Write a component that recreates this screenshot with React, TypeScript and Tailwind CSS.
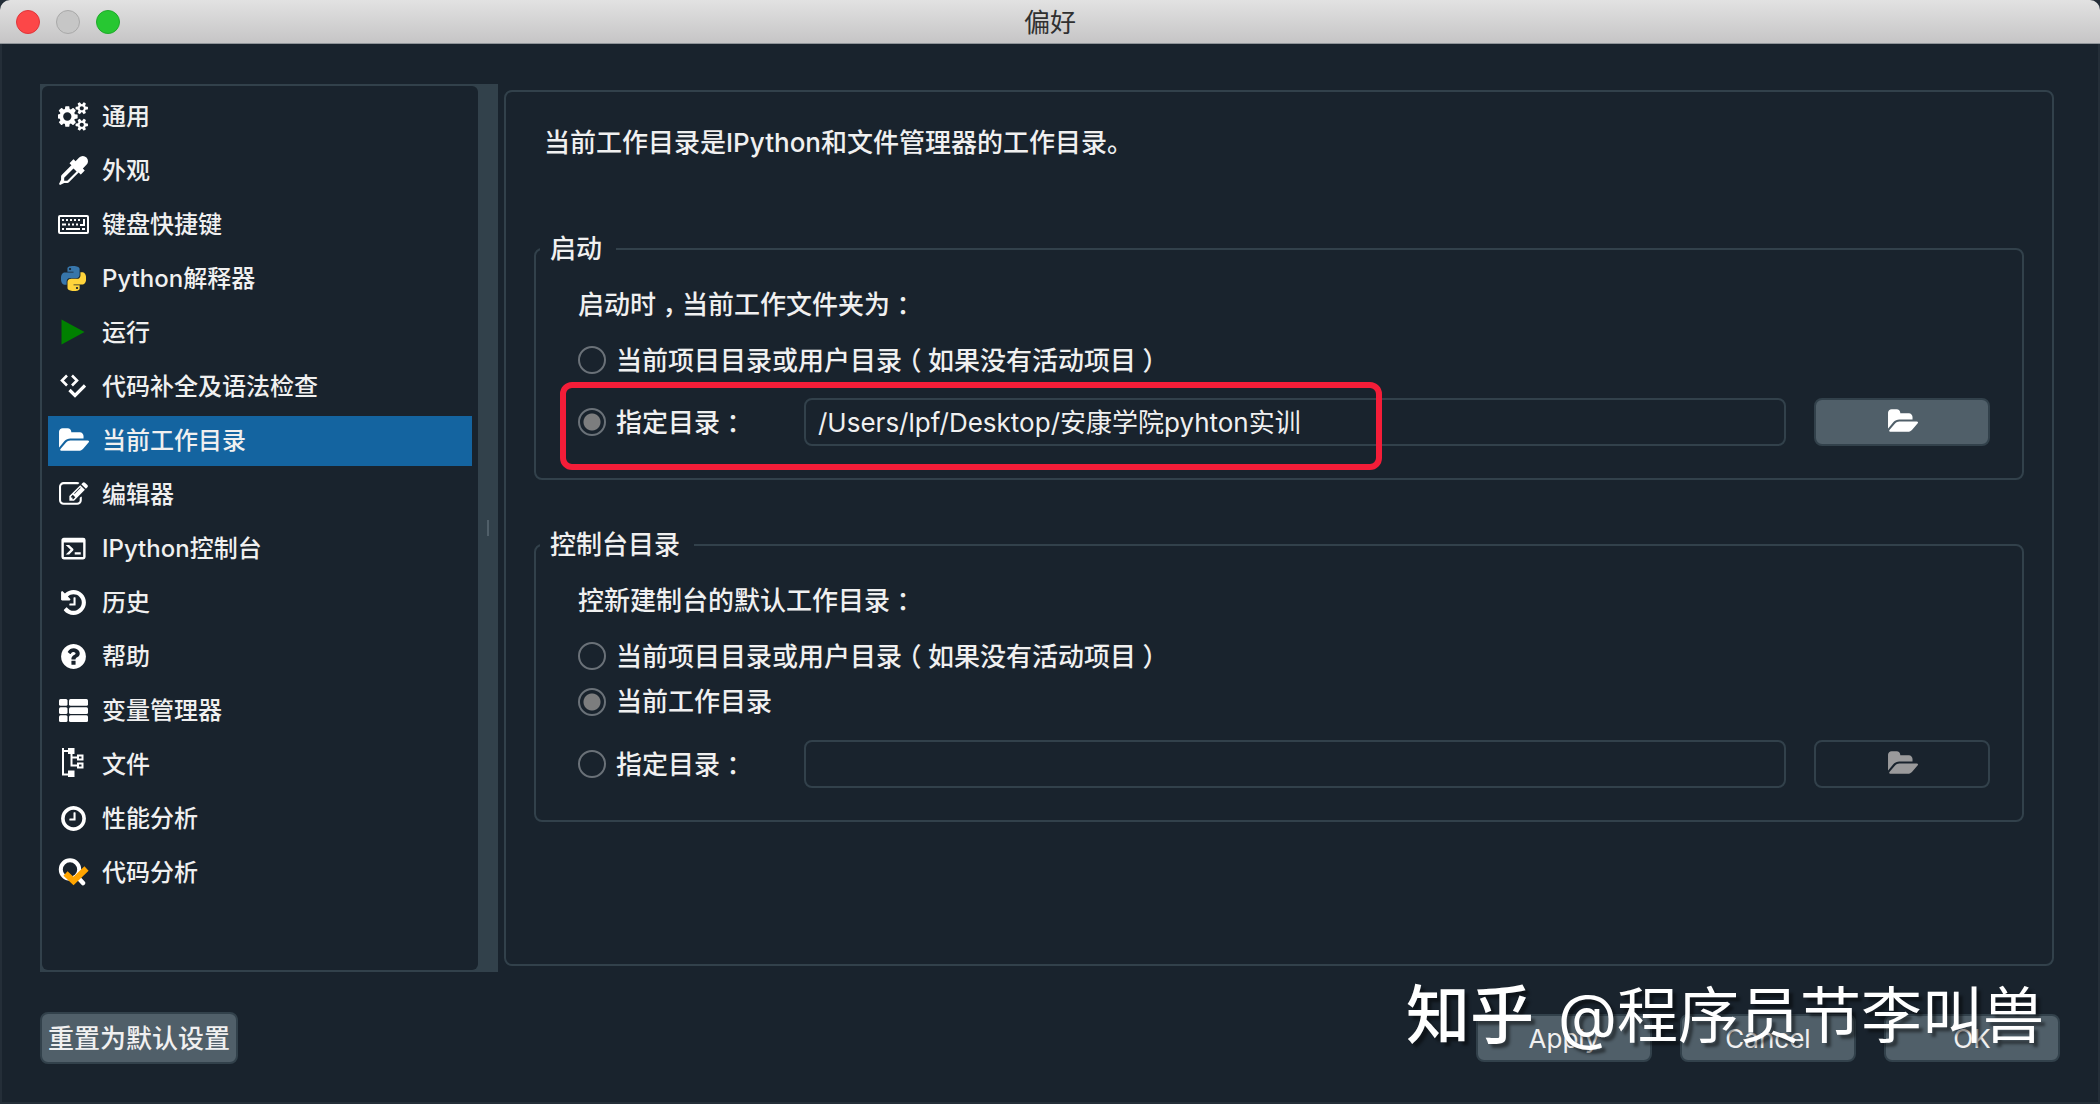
import React, { useState } from 'react';

type IconProps = { className?: string };

function CogsIcon() {
  return (
    <svg viewBox="0 0 1920 1792" className="w-[31px] h-[29px]" fill="currentColor" aria-hidden="true">
      <path d="M832 896q0-106-75-181t-181-75-181 75-75 181 75 181 181 75 181-75 75-181zm768 512q0-52-38-90t-90-38-90 38-38 90q0 53 37.5 90.5t90.5 37.5 90.5-37.5 37.5-90.5zm0-1024q0-52-38-90t-90-38-90 38-38 90q0 53 37.5 90.5t90.5 37.5 90.5-37.5 37.5-90.5zm-384 421v185q0 10-7 19.5t-16 10.5l-155 24q-11 35-32 76 34 48 90 115 7 11 7 20 0 12-7 19-23 30-82.5 89.5t-78.5 59.5q-11 0-21-7l-115-90q-37 19-77 31-11 108-23 155-7 24-30 24h-186q-11 0-20-7.5t-10-17.5l-23-153q-34-10-75-31l-118 89q-7 7-20 7-11 0-21-8-144-133-144-160 0-9 7-19 10-14 41-53t47-61q-23-44-35-82l-152-24q-10-1-17-9.5t-7-19.5v-185q0-10 7-19.5t16-10.5l155-24q11-35 32-76-34-48-90-115-7-11-7-20 0-12 7-20 22-30 82-89t79-59q11 0 21 7l115 90q34-18 77-32 11-108 23-154 7-24 30-24h186q11 0 20 7.5t10 17.5l23 153q34 10 75 31l118-89q8-7 20-7 11 0 21 8 144 133 144 160 0 8-7 19-12 16-42 54t-45 60q23 48 34 82l152 23q10 2 17 10.5t7 19.5zm640 533v140q0 16-149 31-12 27-30 52 51 113 51 138 0 4-4 7-122 71-124 71-8 0-46-47t-52-68q-20 2-30 2t-30-2q-14 21-52 68t-46 47q-2 0-124-71-4-3-4-7 0-25 51-138-18-25-30-52-149-15-149-31v-140q0-16 149-31 13-29 30-52-51-113-51-138 0-4 4-7 4-2 35-20t59-34 30-16q8 0 46 46.5t52 67.5q20-2 30-2t30 2q51-71 92-112l6-2q4 0 124 70 4 3 4 7 0 25-51 138 17 23 30 52 149 15 149 31zm0-1024v140q0 16-149 31-12 27-30 52 51 113 51 138 0 4-4 7-122 71-124 71-8 0-46-47t-52-68q-20 2-30 2t-30-2q-14 21-52 68t-46 47q-2 0-124-71-4-3-4-7 0-25 51-138-18-25-30-52-149-15-149-31v-140q0-16 149-31 13-29 30-52-51-113-51-138 0-4 4-7 4-2 35-20t59-34 30-16q8 0 46 46.5t52 67.5q20-2 30-2t30 2q51-71 92-112l6-2q4 0 124 70 4 3 4 7 0 25-51 138 17 23 30 52 149 15 149 31z" />
    </svg>
  );
}

function DropperIcon() {
  return (
    <svg viewBox="0 0 1792 1792" className="size-[29px]" fill="currentColor" aria-hidden="true">
      <path d="M1698 94q94 94 94 226.5t-94 225.5l-225 223 104 104q10 10 10 23t-10 23l-210 210q-10 10-23 10t-23-10l-105-105-603 603q-37 37-90 37h-203l-256 128-64-64 128-256v-203q0-53 37-90l603-603-105-105q-10-10-10-23t10-23l210-210q10-10 23-10t23 10l104 104 223-225q93-94 225.5-94t226.5 94zm-1186 1442l576-576-192-192-576 576v192h192z" />
    </svg>
  );
}

function KeyboardIcon() {
  return (
    <svg viewBox="0 0 31 19" className="w-[31px] h-[19px]" fill="currentColor" aria-hidden="true">
      <path fillRule="evenodd" d="M2 0H29A2 2 0 0 1 31 2V17A2 2 0 0 1 29 19H2A2 2 0 0 1 0 17V2A2 2 0 0 1 2 0ZM2 2V17H29V2Z" />
      <path d="M4 4h2v2h-2zM8 4h2v2h-2zM12 4h2v2h-2zM16 4h2v2h-2zM20 4h2v2h-2zM25 4h2v7h-5v-2h3zM4 8.500h4v2h-4zM10 8.500h2v2h-2zM14 8.500h2v2h-2zM18 8.500h2v2h-2zM4 13h2v2h-2zM8 13h14v2h-14zM24 13h3v2h-3z" />
    </svg>
  );
}

function PythonIcon() {
  return (
    <svg viewBox="0 0 24 24" className="size-[25px]" aria-hidden="true">
      <path
        fill="#3776ab"
        d="M14.25.18l.9.2.73.26.59.3.45.32.34.34.25.34.16.33.1.3.04.26.02.2-.01.13V8.5l-.05.63-.13.55-.21.46-.26.38-.3.31-.33.25-.35.19-.35.14-.33.1-.3.07-.26.04-.21.02H8.77l-.69.05-.59.14-.5.22-.41.27-.33.32-.27.35-.2.36-.15.37-.1.35-.07.32-.04.27-.02.21v3.06H3.17l-.21-.03-.28-.07-.32-.12-.35-.18-.36-.26-.36-.36-.35-.46-.32-.59-.28-.73-.21-.88-.14-1.05-.05-1.23.06-1.22.16-1.04.24-.87.32-.71.36-.57.4-.44.42-.33.42-.24.4-.16.36-.1.32-.05.24-.01h.16l.06.01h8.16v-.83H6.18l-.01-2.75-.02-.37.05-.34.11-.31.17-.28.25-.26.31-.23.38-.2.44-.18.51-.15.58-.12.64-.1.71-.06.77-.04.84-.02 1.27.05zm-6.3 1.98l-.23.33-.08.41.08.41.23.34.33.22.41.09.41-.09.33-.22.23-.34.08-.41-.08-.41-.23-.33-.33-.22-.41-.09-.41.09z"
      />
      <path
        fill="#ffd43b"
        d="M21.1 6.11l.28.06.32.12.35.18.36.27.36.35.35.47.32.59.28.73.21.88.14 1.04.05 1.23-.06 1.23-.16 1.04-.24.86-.32.71-.36.57-.4.45-.42.33-.42.24-.4.16-.36.09-.32.05-.24.02-.16-.01h-8.22v.82h5.84l.01 2.76.02.36-.05.34-.11.31-.17.29-.25.25-.31.24-.38.2-.44.17-.51.15-.58.13-.64.09-.71.07-.77.04-.84.01-1.27-.04-1.07-.14-.9-.2-.73-.25-.59-.3-.45-.33-.34-.34-.25-.34-.16-.33-.1-.3-.04-.25-.02-.2.01-.13v-5.34l.05-.64.13-.54.21-.46.26-.38.3-.32.33-.24.35-.2.35-.14.33-.1.3-.06.26-.04.21-.02.13-.01h5.84l.69-.05.59-.14.5-.21.41-.28.33-.32.27-.35.2-.36.15-.36.1-.35.07-.32.04-.28.02-.21V6.07h2.09l.14.01zm-6.47 14.25l-.23.33-.08.41.08.41.23.33.33.23.41.08.41-.08.33-.23.23-.33.08-.41-.08-.41-.23-.33-.33-.23-.41-.08-.41.08z"
      />
    </svg>
  );
}

function PlayIcon() {
  return (
    <svg viewBox="0 0 24 26" className="w-6 h-[26px]" aria-hidden="true">
      <path fill="#008000" d="M0.500 0.500L23.500 13L0.500 25.500Z" />
    </svg>
  );
}

function CodeCheckIcon() {
  return (
    <svg viewBox="0 0 26 24" className="w-[26px] h-6" fill="none" stroke="currentColor" strokeWidth="2.600" aria-hidden="true">
      <path d="M7 1.500L2 6.500L7 11.500M12 1.500L17 6.500L12 11.500" />
      <path d="M9.500 16L15 21.500L25 11.500" strokeWidth="3.200" />
    </svg>
  );
}

function FolderOpenIcon({ className = '' }: IconProps) {
  return (
    <svg viewBox="0 0 1943 1792" className={`w-[31px] h-[29px] ${className}`} fill="currentColor" aria-hidden="true">
      <path d="M1943 952q0 31-31 66l-336 396q-43 51-120.500 86.500t-143.500 35.500h-1088q-34 0-60.500-13t-26.500-43q0-31 31-66l336-396q43-51 120.500-86.500t143.500-35.500h1088q34 0 60.500 13t26.500 43zm-343-344v160h-832q-94 0-197 47.500t-164 119.500l-337 396-5 6q0-4-.5-12.500t-.5-12.500v-960q0-92 66-158t158-66h320q92 0 158 66t66 158v32h544q92 0 158 66t66 158z" />
    </svg>
  );
}

function EditIcon() {
  return (
    <svg viewBox="0 0 1792 1792" className="size-[29px]" fill="currentColor" aria-hidden="true">
      <path d="M888 1184l116-116-152-152-116 116v56h96v96h56zm440-720q-16-16-33 1l-350 350q-17 17-1 33t33-1l350-350q17-17 1-33zm80 594v190q0 119-84.500 203.500t-203.500 84.500h-832q-119 0-203.500-84.500t-84.500-203.500v-832q0-119 84.500-203.500t203.500-84.500h832q63 0 117 25 15 7 18 23 3 17-9 29l-49 49q-14 14-32 8-23-6-45-6h-832q-66 0-113 47t-47 113v832q0 66 47 113t113 47h832q66 0 113-47t47-113v-126q0-13 9-22l64-64q15-15 35-7t20 29zm-96-738l288 288-672 672h-288v-288zm444 132l-92 92-288-288 92-92q28-28 68-28t68 28l152 152q28 28 28 68t-28 68z" />
    </svg>
  );
}

function ConsoleIcon() {
  return (
    <svg viewBox="0 0 24 24" className="size-[29px]" fill="currentColor" aria-hidden="true">
      <path d="M20,19V7H4V19H20M20,3A2,2 0 0,1 22,5V19A2,2 0 0,1 20,21H4A2,2 0 0,1 2,19V5C2,3.890 2.900,3 4,3H20M13,17V15H18V17H13M9.580,13L5.570,9H8.400L11.700,12.300C12.090,12.690 12.090,13.330 11.700,13.720L8.420,17H5.590L9.580,13Z" />
    </svg>
  );
}

function HistoryIcon() {
  return (
    <svg viewBox="0 0 1792 1792" className="size-[29px]" fill="currentColor" aria-hidden="true">
      <path d="M1664 896q0 156-61 298t-164 245-245 164-298 61q-172 0-327-72.500t-264-204.500q-7-10-6.500-22.500t8.500-20.500l137-138q10-9 25-9 16 2 23 12 73 95 179 147t225 52q104 0 198.500-40.500t163.500-109.500 109.500-163.500 40.500-198.500-40.500-198.500-109.500-163.500-163.500-109.500-198.500-40.500q-98 0-188 35.500t-160 101.500l137 138q31 30 14 69-17 40-59 40h-448q-26 0-45-19t-19-45v-448q0-42 40-59 39-17 69 14l130 129q107-101 244.500-156.500t284.500-55.500q156 0 298 61t245 164 164 245 61 298zm-640-288v448q0 14-9 23t-23 9h-320q-14 0-23-9t-9-23v-64q0-14 9-23t23-9h224v-352q0-14 9-23t23-9h64q14 0 23 9t9 23z" />
    </svg>
  );
}

function HelpIcon() {
  return (
    <svg viewBox="0 0 1792 1792" className="size-[29px]" fill="currentColor" aria-hidden="true">
      <path d="M1024 1376v-192q0-14-9-23t-23-9h-192q-14 0-23 9t-9 23v192q0 14 9 23t23 9h192q14 0 23-9t9-23zm256-672q0-88-55.500-163t-138.500-116-170-41q-243 0-371 213-15 24 8 42l132 100q7 6 19 6 16 0 25-12 53-68 86-92 34-24 86-24 48 0 85.500 26t37.500 59q0 38-20 61t-68 45q-63 28-115.500 86.500t-52.500 125.500v36q0 14 9 23t23 9h192q14 0 23-9t9-23q0-19 21.500-49.500t54.500-49.500q32-18 49-28.500t46-35 44.500-48 28-60.500 12.500-81zm384 192q0 209-103 385.500t-279.500 279.500-385.500 103-385.500-103-279.500-279.500-103-385.500 103-385.500 279.500-279.500 385.500-103 385.500 103 279.500 279.500 103 385.500z" />
    </svg>
  );
}

function ListIcon() {
  return (
    <svg viewBox="0 0 29 23" className="w-[29px] h-[23px]" fill="currentColor" aria-hidden="true">
      <rect x="0" y="0" width="8.500" height="6.700" rx="1.500" />
      <rect x="10" y="0" width="19" height="6.700" rx="1.500" />
      <rect x="0" y="8.200" width="8.500" height="6.700" rx="1.500" />
      <rect x="10" y="8.200" width="19" height="6.700" rx="1.500" />
      <rect x="0" y="16.300" width="8.500" height="6.700" rx="1.500" />
      <rect x="10" y="16.300" width="19" height="6.700" rx="1.500" />
    </svg>
  );
}

function FileTreeIcon() {
  return (
    <svg viewBox="0 0 22 29" className="w-[22px] h-[29px] mb-1" fill="none" stroke="currentColor" aria-hidden="true">
      <path d="M1 0V26.500H8M1 3H8M9.500 4V17.500H16M9.500 9.500H16" strokeWidth="2" />
      <path d="M6 0H12.500V6H6ZM6 22.500H12.500V29H6Z" fill="currentColor" stroke="none" />
      <path d="M16 7.500H20.500V11.500H16ZM16 15.500H20.500V19.500H16Z" strokeWidth="2" />
    </svg>
  );
}

function ClockIcon() {
  return (
    <svg viewBox="0 0 1792 1792" className="size-[29px]" fill="currentColor" aria-hidden="true">
      <path d="M1024 544v448q0 14-9 23t-23 9h-320q-14 0-23-9t-9-23v-64q0-14 9-23t23-9h224v-352q0-14 9-23t23-9h64q14 0 23 9t9 23zm416 352q0-148-73-273t-198-198-273-73-273 73-198 198-73 273 73 273 198 198 273 73 273-73 198-198 73-273zm224 0q0 209-103 385.500t-279.500 279.500-385.500 103-385.500-103-279.500-279.500-103-385.500 103-385.500 279.500-279.500 385.500-103 385.500 103 279.500 279.500 103 385.500z" />
    </svg>
  );
}

function AnalysisIcon() {
  return (
    <svg viewBox="0 0 31 28" className="w-[31px] h-7" fill="none" aria-hidden="true">
      <circle cx="12" cy="11.500" r="9.200" stroke="#fff" strokeWidth="4" />
      <path d="M19 18.500L25 25" stroke="#fff" strokeWidth="4.500" strokeLinecap="round" />
      <path d="M7.500 15.500L15.500 23L28.500 10.500" stroke="#ffa500" strokeWidth="6" />
    </svg>
  );
}

const pages = [
  { id: 'general', label: '通用', icon: <CogsIcon /> },
  { id: 'appearance', label: '外观', icon: <DropperIcon /> },
  { id: 'shortcuts', label: '键盘快捷键', icon: <KeyboardIcon /> },
  { id: 'interpreter', label: 'Python解释器', icon: <PythonIcon /> },
  { id: 'run', label: '运行', icon: <PlayIcon /> },
  { id: 'completion', label: '代码补全及语法检查', icon: <CodeCheckIcon /> },
  { id: 'workdir', label: '当前工作目录', icon: <FolderOpenIcon /> },
  { id: 'editor', label: '编辑器', icon: <EditIcon /> },
  { id: 'ipython', label: 'IPython控制台', icon: <ConsoleIcon /> },
  { id: 'history', label: '历史', icon: <HistoryIcon /> },
  { id: 'help', label: '帮助', icon: <HelpIcon /> },
  { id: 'variables', label: '变量管理器', icon: <ListIcon /> },
  { id: 'files', label: '文件', icon: <FileTreeIcon /> },
  { id: 'profiler', label: '性能分析', icon: <ClockIcon /> },
  { id: 'pylint', label: '代码分析', icon: <AnalysisIcon /> },
];

// Full-width punctuation is centred in its cell
function Text({ children }: { children: string }) {
  return (
    <>
      {children.split(/([，：（）])/).map((part, i) =>
        /^[，：（）]$/.test(part) ? (
          <span
            key={i}
            className="inline-block w-[26px] text-center font-['Noto_Sans_CJK_SC',sans-serif] [font-feature-settings:'halt']"
          >
            {part}
          </span>
        ) : (
          part
        ),
      )}
    </>
  );
}

type RadioProps = {
  name: string;
  label: string;
  checked: boolean;
  onChange: () => void;
  className?: string;
};

function Radio({ name, label, checked, onChange, className = '' }: RadioProps) {
  return (
    <label className={`flex items-center gap-[10px] h-9 ${className}`}>
      <input
        type="radio"
        name={name}
        checked={checked}
        onChange={onChange}
        className="appearance-none size-7 shrink-0 rounded-full border-2 border-[#6a7178] checked:bg-[radial-gradient(circle,#7c7d7e_8px,transparent_9px)]"
      />
      <span>
        <Text>{label}</Text>
      </span>
    </label>
  );
}

type DirectoryFieldProps = {
  label: string;
  value: string;
  onChange: (v: string) => void;
  disabled: boolean;
};

function DirectoryField({ label, value, onChange, disabled }: DirectoryFieldProps) {
  return (
    <div className="flex flex-1 items-center gap-7">
      <input
        type="text"
        aria-label={label}
        value={value}
        disabled={disabled}
        onChange={(e) => onChange(e.target.value)}
        className="flex-1 min-w-0 h-12 px-3 pb-1 rounded-lg border-2 border-[#32414b] bg-[#19232d] text-[#f0f0f0] font-normal"
      />
      <button
        type="button"
        aria-label="选择目录"
        disabled={disabled}
        className="flex items-center justify-center w-44 h-12 pb-0.5 rounded-lg border-2 border-[#32414b] bg-[#505f69] text-white disabled:bg-[#19232d] disabled:text-[#9a9a9b]"
      >
        <FolderOpenIcon />
      </button>
    </div>
  );
}

function Group({ title, className, children }: { title: string; className: string; children: React.ReactNode }) {
  return (
    <fieldset className={`px-1 pb-8 rounded-lg border-2 border-[#32414b] ${className}`}>
      <legend className="h-9 pl-[10px] pr-[14px]">{title}</legend>
      <div className="pt-[18px] pl-[38px] pr-7">{children}</div>
    </fieldset>
  );
}

export default function App() {
  const [page, setPage] = useState('workdir');
  const [startup, setStartup] = useState('fixed');
  const [startupDir, setStartupDir] = useState('/Users/lpf/Desktop/安康学院pyhton实训');
  const [consoleMode, setConsoleMode] = useState('cwd');
  const [consoleDir, setConsoleDir] = useState('');

  return (
    <div
      lang="zh-CN"
      className="relative flex flex-col min-h-screen bg-[#19232d] text-[#f0f0f0] text-[26px] leading-9 font-medium font-['Inter','Noto_Sans_CJK_SC',sans-serif] shadow-[inset_0_0_0_2px_#242e38]"
    >
      <header className="relative flex items-center justify-center h-11 pt-0.5 rounded-t-[10px] bg-linear-to-b from-[#e2e2e2] to-[#c6c5c6] border-b border-[#8f9499]">
        <div className="absolute left-4 top-[10px] flex gap-4">
          <button type="button" aria-label="关闭" className="size-6 rounded-full border border-[#e0353a] bg-[#fc4748]" />
          <button type="button" aria-label="最小化" className="size-6 rounded-full border border-[#a9a9a9] bg-[#c6c6c6]" />
          <button type="button" aria-label="缩放" className="size-6 rounded-full border border-[#1faa2b] bg-[#27c732]" />
        </div>
        <h1 className="font-normal text-[#303030]">偏好</h1>
      </header>

      <div className="flex flex-1 px-10 pt-10">
        <aside className="flex shrink-0 bg-[#32414b] p-0.5 pr-0">
          <ul className="w-[436px] p-1.5 rounded-md bg-[#19232d] text-2xl">
            {pages.map((p) => (
              <li key={p.id} className="mb-1">
                <button
                  type="button"
                  onClick={() => setPage(p.id)}
                  className={`flex items-center gap-[14px] w-full h-[50px] pl-[10px] text-left ${
                    page === p.id ? 'bg-[#1464a0]' : ''
                  }`}
                >
                  <span className="flex items-center justify-center w-[30px] pb-0.5 text-white *:shrink-0">{p.icon}</span>
                  {p.label}
                </button>
              </li>
            ))}
          </ul>
          <div className="flex items-center justify-center w-5">
            <div className="w-0.5 h-4 bg-[#505f69]" />
          </div>
        </aside>

        <main className="flex-1 min-w-0 my-1.5 mx-1.5 px-7 pt-[33px] rounded-lg border-2 border-[#32414b]">
          <p className="pl-[10px]">
            <Text>当前工作目录是IPython和文件管理器的工作目录。</Text>
          </p>

          <Group title="启动" className="mt-[70px]">
            <p>
              <Text>启动时，当前工作文件夹为：</Text>
            </p>
            <Radio
              name="startup"
              label="当前项目目录或用户目录（如果没有活动项目）"
              checked={startup === 'project'}
              onChange={() => setStartup('project')}
              className="mt-[19px]"
            />
            <div className="relative flex items-center mt-5">
              <Radio
                name="startup"
                label="指定目录："
                checked={startup === 'fixed'}
                onChange={() => setStartup('fixed')}
                className="w-[226px]"
              />
              <DirectoryField
                label="启动目录"
                value={startupDir}
                onChange={setStartupDir}
                disabled={startup !== 'fixed'}
              />
              <div className="absolute -left-[18px] -top-4 w-[822px] h-[88px] rounded-xl border-[6px] border-[#f41d38] pointer-events-none" />
            </div>
          </Group>

          <Group title="控制台目录" className="mt-[47px]">
            <p>
              <Text>控新建制台的默认工作目录：</Text>
            </p>
            <Radio
              name="console"
              label="当前项目目录或用户目录（如果没有活动项目）"
              checked={consoleMode === 'project'}
              onChange={() => setConsoleMode('project')}
              className="mt-[19px]"
            />
            <Radio
              name="console"
              label="当前工作目录"
              checked={consoleMode === 'cwd'}
              onChange={() => setConsoleMode('cwd')}
              className="mt-[10px]"
            />
            <div className="flex items-center mt-5">
              <Radio
                name="console"
                label="指定目录："
                checked={consoleMode === 'fixed'}
                onChange={() => setConsoleMode('fixed')}
                className="w-[226px]"
              />
              <DirectoryField
                label="控制台目录"
                value={consoleDir}
                onChange={setConsoleDir}
                disabled={consoleMode !== 'fixed'}
              />
            </div>
          </Group>
        </main>
      </div>

      <footer className="flex items-center justify-between p-10">
        <button type="button" className="h-[52px] px-1.5 pt-0.5 rounded-lg border-2 border-[#32414b] bg-[#505f69]">
          重置为默认设置
        </button>
        <div className="flex gap-7">
          {['Apply', 'Cancel', 'OK'].map((name) => (
            <button
              key={name}
              type="button"
              className="w-44 h-12 pt-0.5 rounded-lg border-2 border-[#32414b] bg-[#505f69] font-normal"
            >
              {name}
            </button>
          ))}
        </div>
      </footer>

      <div className="absolute right-14 bottom-[46px] flex items-baseline gap-6 text-[61px] leading-[84px] font-normal text-white whitespace-nowrap pointer-events-none [text-shadow:4px_4px_3px_rgba(0,0,0,0.45)]">
        <span className="text-[64px] font-medium">知乎</span>
        <span>@程序员节李叫兽</span>
      </div>
    </div>
  );
}
